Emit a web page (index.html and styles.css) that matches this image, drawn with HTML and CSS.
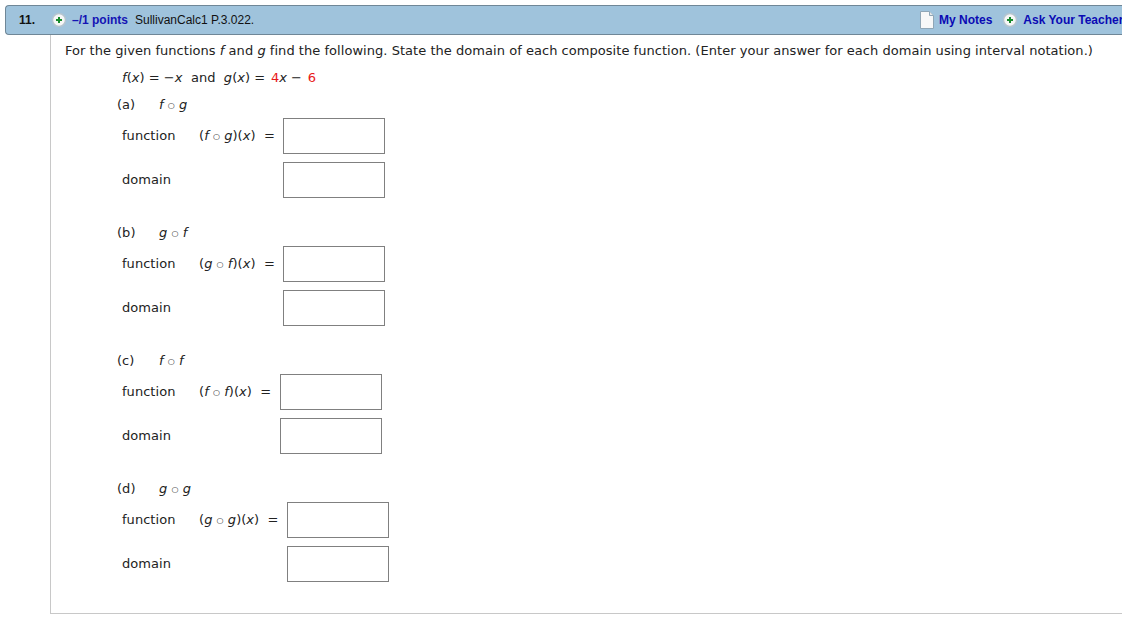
FILE: index.html
```html
<!DOCTYPE html>
<html lang="en">
<head>
  <meta charset="UTF-8">
  <title>SullivanCalc1 P.3.022.</title>
  <link rel="stylesheet" href="styles.css">
</head>
<body>
  <div class="question-bar">
    <span class="number">11.</span>
    <svg class="plus-icon" width="16" height="16" viewBox="0 0 16 16">
      <circle cx="8" cy="8" r="6.5" fill="#f6f6f6" stroke="#b4c4cf" stroke-width="1.5"/>
      <path d="M8 5v6M5 8h6" stroke="#178a2b" stroke-width="2"/>
    </svg>
    <span class="points">&ndash;/1 points</span>
    <span class="source">SullivanCalc1 P.3.022.</span>
    <div class="bar-links">
      <svg class="note-icon" width="14" height="18" viewBox="0 0 14 18">
        <path d="M0.5 0.5h9l4 4v13h-13z" fill="#f7f8f8" stroke="#8fa6b6"/>
        <path d="M9.5 0.5v4h4" fill="#e4e8ea" stroke="#8fa6b6"/>
      </svg>
      <span class="bar-link">My Notes</span>
      <svg class="plus-icon ask" width="16" height="16" viewBox="0 0 16 16">
        <circle cx="8" cy="8" r="6.5" fill="#f6f6f6" stroke="#b4c4cf" stroke-width="1.5"/>
        <path d="M8 5v6M5 8h6" stroke="#178a2b" stroke-width="2"/>
      </svg>
      <span class="bar-link">Ask Your Teacher</span>
    </div>
  </div>

  <div class="question-body">
    <p class="prompt">For the given functions <i>f</i> and <i>g</i> find the following. State the domain of each composite function. (Enter your answer for each domain using interval notation.)</p>
    <p class="given"><i>f</i>(<i>x</i>) = &minus;<i>x</i> &nbsp;and&nbsp; <i>g</i>(<i>x</i>) = <span class="red">4</span><i>x</i> &minus; <span class="red">6</span></p>

    <div class="part">
      <p class="part-title"><span class="letter">(a)</span><i>f</i> <span class="comp">&#9675;</span> <i>g</i></p>
      <div class="answers">
        <span>function</span>
        <span class="expr">(<i>f</i> <span class="comp">&#9675;</span> <i>g</i>)(<i>x</i>) &nbsp;=</span>
        <input type="text">
        <span>domain</span>
        <span></span>
        <input type="text">
      </div>
    </div>

    <div class="part">
      <p class="part-title"><span class="letter">(b)</span><i>g</i> <span class="comp">&#9675;</span> <i>f</i></p>
      <div class="answers">
        <span>function</span>
        <span class="expr">(<i>g</i> <span class="comp">&#9675;</span> <i>f</i>)(<i>x</i>) &nbsp;=</span>
        <input type="text">
        <span>domain</span>
        <span></span>
        <input type="text">
      </div>
    </div>

    <div class="part">
      <p class="part-title"><span class="letter">(c)</span><i>f</i> <span class="comp">&#9675;</span> <i>f</i></p>
      <div class="answers">
        <span>function</span>
        <span class="expr">(<i>f</i> <span class="comp">&#9675;</span> <i>f</i>)(<i>x</i>) &nbsp;=</span>
        <input type="text">
        <span>domain</span>
        <span></span>
        <input type="text">
      </div>
    </div>

    <div class="part">
      <p class="part-title"><span class="letter">(d)</span><i>g</i> <span class="comp">&#9675;</span> <i>g</i></p>
      <div class="answers">
        <span>function</span>
        <span class="expr">(<i>g</i> <span class="comp">&#9675;</span> <i>g</i>)(<i>x</i>) &nbsp;=</span>
        <input type="text">
        <span>domain</span>
        <span></span>
        <input type="text">
      </div>
    </div>
  </div>
</body>
</html>
```

FILE: styles.css
```css
html, body {
  margin: 0;
  height: 617px;
  overflow: hidden;
  background: #fff;
}
body {
  font-family: "DejaVu Sans", Verdana, sans-serif;
  font-size: 13px;
  letter-spacing: 0.04px;
  color: #222;
  padding-top: 5px;
  box-sizing: border-box;
}
p {
  margin: 0;
}
.question-bar {
  display: flex;
  align-items: center;
  width: 1140px;
  height: 30px;
  box-sizing: border-box;
  margin-left: 5px;
  padding-left: 13px;
  background: #9fc3dc;
  border: 1px solid #6f8797;
  border-right: none;
  border-radius: 4px 0 0 4px;
  font-family: "Liberation Sans", Arial, sans-serif;
  font-size: 12px;
  letter-spacing: 0;
  color: #111;
}
.number {
  width: 32px;
  font-weight: bold;
}
.plus-icon {
  margin-right: 5px;
}
.points {
  width: 63px;
  color: #1414b4;
  font-weight: bold;
}
.bar-links {
  display: flex;
  align-items: center;
  margin-left: auto;
  width: 225px;
}
.note-icon {
  margin-right: 5px;
}
.bar-link {
  color: #0a0ab4;
  font-weight: bold;
}
.plus-icon.ask {
  margin-left: 10px;
}
.question-body {
  height: 579px;
  box-sizing: border-box;
  margin-left: 50px;
  padding: 8px 0 0 14px;
  border-left: 1px solid #c8c8c8;
  border-bottom: 1px solid #c8c8c8;
}
.prompt {
  line-height: 16px;
  white-space: nowrap;
}
.given {
  margin: 11px 0 11px 57px;
  line-height: 16px;
}
.red {
  margin-left: 1.5px;
  color: #e81818;
}
.part {
  margin-left: 52px;
  height: 128px;
}
.part-title {
  line-height: 16px;
}
.letter {
  display: inline-block;
  width: 42px;
}
.comp {
  font-size: 8px;
  vertical-align: 1px;
}
.answers {
  display: grid;
  grid-template-columns: 77px auto auto;
  justify-content: start;
  align-items: center;
  row-gap: 8px;
  margin: 4px 0 0 5px;
}
.answers > span {
  padding-bottom: 2px;
}
.expr {
  padding-right: 8.6px;
  white-space: nowrap;
}
input {
  width: 102px;
  height: 36px;
  box-sizing: border-box;
  border: 1px solid #808080;
  background: #fff;
  padding: 0;
  margin: 0;
}
```
